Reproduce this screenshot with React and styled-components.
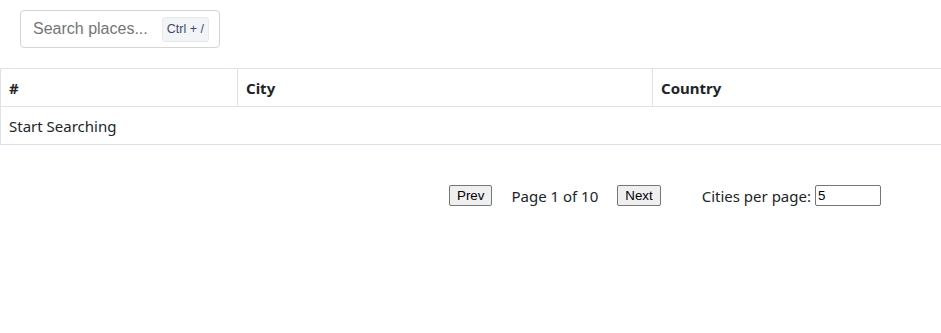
import React from "react";
import styled, { createGlobalStyle } from "styled-components";

const Global = createGlobalStyle`
  html, body { margin: 0; padding: 0; background: #fff; }
  body { font-family: "Noto Sans", "Open Sans", sans-serif; color: #212529; overflow: hidden; }
`;

const Page = styled.div`
  width: 941px;
  overflow: hidden;
`;

const SearchBar = styled.div`
  padding: 10px 20px 20px;
`;

const SearchBox = styled.label`
  display: flex;
  align-items: center;
  box-sizing: border-box;
  width: 200px;
  height: 38px;
  padding: 0 10px 0 12px;
  border: 1px solid #d3d5d9;
  border-radius: 4px;
`;

const SearchInput = styled.input`
  flex: 1;
  min-width: 0;
  border: none;
  outline: none;
  padding: 0;
  font-family: "Liberation Sans", Arial, sans-serif;
  font-size: 16px;
  color: #333;
  background: transparent;
  &::placeholder { color: #757575; }
`;

const Kbd = styled.kbd`
  display: inline-flex;
  align-items: center;
  height: 25px;
  box-sizing: border-box;
  padding: 0 4px;
  background: #f3f4f6;
  border: 1px solid #e8e9ec;
  border-radius: 3px;
  font-family: "Liberation Sans", Arial, sans-serif;
  font-size: 12.5px;
  color: #3c4b6a;
`;

const Table = styled.table`
  width: 960px;
  border-collapse: collapse;
  font-size: 15px;
`;

const Th = styled.th`
  text-align: left;
  font-weight: 700;
  padding: 8px 8px;
  height: 38px;
  box-sizing: border-box;
  border: 1px solid #dee2e6;
  width: ${(p) => p.$w || "auto"};
`;

const Td = styled.td`
  padding: 8px 8px;
  height: 38px;
  box-sizing: border-box;
  border: 1px solid #dee2e6;
  border-right-color: transparent;
`;

const Pager = styled.div`
  display: flex;
  justify-content: flex-end;
  align-items: center;
  padding: 40px 60px 0 0;
  font-size: 15px;
`;

const Btn = styled.button`
  font-family: "Liberation Sans", Arial, sans-serif;
  font-size: 13.333px;
  height: 21px;
  padding: 1px 7px;
  border: 1px solid #767676;
  border-radius: 2px;
  background: #efefef;
  color: #000;
`;

const PageInfo = styled.span`
  margin: 0 19px;
`;

const PerPage = styled.label`
  margin-left: 41px;
  display: flex;
  align-items: center;
  gap: 4px;
`;

const PerInput = styled.input`
  width: 66px;
  height: 21px;
  box-sizing: border-box;
  padding: 1px 2px;
  border: 1px solid #767676;
  border-radius: 2px;
  font-family: "Liberation Sans", Arial, sans-serif;
  font-size: 13.333px;
`;

export default function App() {
  return (
    <Page>
      <Global />
      <SearchBar>
        <SearchBox>
          <SearchInput placeholder="Search places..." />
          <Kbd>Ctrl + /</Kbd>
        </SearchBox>
      </SearchBar>
      <Table>
        <thead>
          <tr>
            <Th $w="237px">#</Th>
            <Th $w="415px">City</Th>
            <Th>Country</Th>
          </tr>
        </thead>
        <tbody>
          <tr>
            <Td colSpan={3}>Start Searching</Td>
          </tr>
        </tbody>
      </Table>
      <Pager>
        <Btn>Prev</Btn>
        <PageInfo>Page 1 of 10</PageInfo>
        <Btn>Next</Btn>
        <PerPage>
          Cities per page:
          <PerInput type="number" defaultValue={5} />
        </PerPage>
      </Pager>
    </Page>
  );
}
